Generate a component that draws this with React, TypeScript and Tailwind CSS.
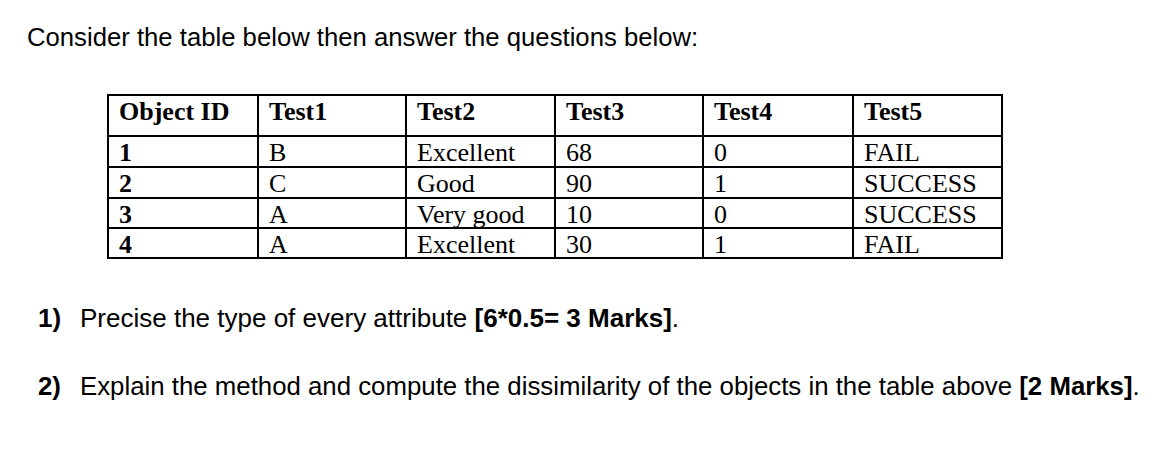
import React from 'react';

const headers = ['Object ID', 'Test1', 'Test2', 'Test3', 'Test4', 'Test5'];

const rows = [
  ['1', 'B', 'Excellent', '68', '0', 'FAIL'],
  ['2', 'C', 'Good', '90', '1', 'SUCCESS'],
  ['3', 'A', 'Very good', '10', '0', 'SUCCESS'],
  ['4', 'A', 'Excellent', '30', '1', 'FAIL'],
];

const rowHeights = ['h-[31px]', 'h-[31px]', 'h-[30px]', 'h-[30px]'];

const App: React.FC = () => {
  return (
    <div className="w-[1150px] h-[451px] bg-white text-black overflow-hidden">
      <p className="pt-[22px] pl-[27px] text-[25.7px] leading-[30px] font-['Liberation_Sans',Arial,sans-serif]">
        Consider the table below then answer the questions below:
      </p>

      <table className="mt-[42px] ml-[107px] border-collapse table-fixed w-[896px] font-['Liberation_Serif','Times_New_Roman',serif] text-[26px] leading-[25px]">
        <colgroup>
          <col className="w-[150px]" />
          <col className="w-[148px]" />
          <col className="w-[149px]" />
          <col className="w-[148px]" />
          <col className="w-[150px]" />
          <col className="w-[149px]" />
        </colgroup>
        <thead>
          <tr className="h-[41px]">
            {headers.map((h) => (
              <th key={h} className="border-2 border-black text-left align-top font-bold pt-[3px] pl-[10px]">
                {h}
              </th>
            ))}
          </tr>
        </thead>
        <tbody>
          {rows.map((r, i) => (
            <tr key={i} className={rowHeights[i]}>
              {r.map((c, j) => (
                <td
                  key={j}
                  className={`border-2 border-black text-left align-top pt-[3px] pl-[10px] ${j === 0 ? 'font-bold' : ''}`}
                >
                  {c}
                </td>
              ))}
            </tr>
          ))}
        </tbody>
      </table>

      <ol className="mt-[45px] font-['Liberation_Sans',Arial,sans-serif] text-[26px] leading-[28px] flex flex-col gap-[40px]">
        <li className="flex pl-[38px]">
          <span className="w-[42px] shrink-0 font-bold">1)</span>
          <span>
            Precise the type of every attribute <b>[6*0.5= 3 Marks]</b>.
          </span>
        </li>
        <li className="flex pl-[38px] text-[25.8px]">
          <span className="w-[42px] shrink-0 font-bold">2)</span>
          <span>
            Explain the method and compute the dissimilarity of the objects in the table above <b>[2 Marks]</b>.
          </span>
        </li>
      </ol>
    </div>
  );
};

export default App;
